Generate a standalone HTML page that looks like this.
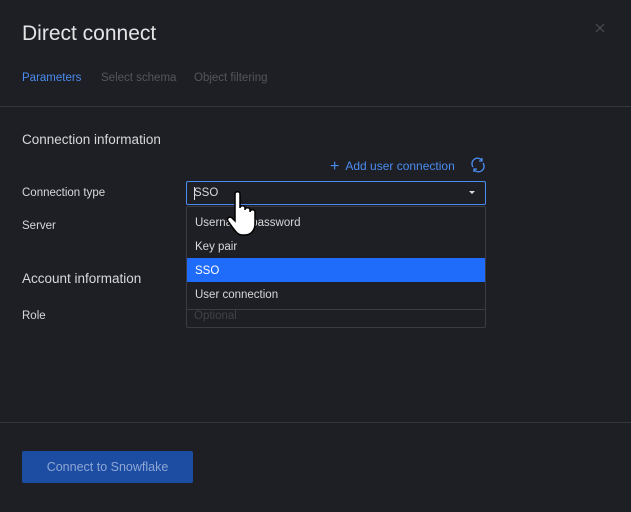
<!DOCTYPE html>
<html><head><style>
body{margin:0;width:631px;height:512px;background:#1e1f24;font-family:"Liberation Sans",sans-serif;position:relative;overflow:hidden}
.a{position:absolute;white-space:nowrap}
</style></head><body>
<div class="a" style="left:22px;top:22px;font-size:21px;color:#e4e4e6">Direct connect</div>
<svg class="a" style="left:595px;top:23px" width="10" height="10" viewBox="0 0 10 10" stroke="#4a4c52" stroke-width="1.2"><path d="M1 1l8 8M9 1l-8 8"/></svg>
<div class="a" style="left:22px;top:72px;font-size:11.5px;color:#4a8cf0">Parameters</div>
<div class="a" style="left:101px;top:72px;font-size:11.5px;color:#54565c">Select schema</div>
<div class="a" style="left:194px;top:72px;font-size:11.5px;color:#54565c">Object filtering</div>
<div class="a" style="left:0;top:106px;width:631px;height:1px;background:#34363b"></div>
<div class="a" style="left:22px;top:132px;font-size:13.5px;color:#d8d8da">Connection information</div>
<div class="a" style="left:330px;top:157px;font-size:12px;color:#4a8cf0"><span style="font-size:16px;position:relative;top:1px">+</span>&nbsp; Add user connection</div>
<svg class="a" style="left:470px;top:157px" width="16" height="16" viewBox="0 0 16 16" fill="none" stroke="#4a8cf0" stroke-width="1.3"><path d="M3 10A5.5 5.5 0 0 1 12 3.5M13 6A5.5 5.5 0 0 1 4 12.5"/><path d="M12 1v3h-3M4 15v-3h3"/></svg>
<div class="a" style="left:22px;top:187px;font-size:11.5px;color:#d8d8da">Connection type</div>
<div class="a" style="left:22px;top:220px;font-size:11.5px;color:#d8d8da">Server</div>
<div class="a" style="left:22px;top:271px;font-size:13.5px;color:#d8d8da">Account information</div>
<div class="a" style="left:22px;top:310px;font-size:11.5px;color:#d8d8da">Role</div>
<div class="a" style="left:186px;top:181px;width:298px;height:22px;border:1px solid #4a8cf0;border-radius:2px"></div>
<div class="a" style="left:194px;top:187px;font-size:11.5px;color:#d8d8da">SSO</div>
<div class="a" style="left:194px;top:187px;width:1px;height:13px;background:#ddd"></div>
<div class="a" style="left:469px;top:191px;width:0;height:0;border-left:3px solid transparent;border-right:3px solid transparent;border-top:3px solid #ddd"></div>
<div class="a" style="left:186px;top:206px;width:298px;height:120px;border:1px solid #3a3c42;border-radius:2px"></div>
<div class="a" style="left:194px;top:310px;font-size:11.5px;color:#3f4146">Optional</div>
<div class="a" style="left:187px;top:207px;width:298px;height:102px;background:#1e1f24;border-bottom:1px solid #3a3c42;border-radius:2px"></div>
<div class="a" style="left:195px;top:217px;font-size:11.5px;color:#d8d8da">Username/password</div>
<div class="a" style="left:195px;top:241px;font-size:11.5px;color:#d8d8da">Key pair</div>
<div class="a" style="left:187px;top:258px;width:298px;height:24px;background:#1f6cfb"></div>
<div class="a" style="left:195px;top:265px;font-size:11.5px;color:#fff">SSO</div>
<div class="a" style="left:195px;top:289px;font-size:11.5px;color:#d8d8da">User connection</div>
<svg class="a" style="left:226px;top:190px" width="34" height="48" viewBox="0 0 34 48"><path d="M9 4c0-3 5-3 5 0v14c0-3 5-3 5 0v2c0-3 5-3 5 0v2c0-3 5-3 5 0v12c0 6-4 11-10 11h-2c-5 0-7-3-10-7l-5-7c-2-3 2-5 4-3l3 3V4z" fill="#fff" stroke="#000" stroke-width="1.5"/></svg>
<div class="a" style="left:0;top:422px;width:631px;height:1px;background:#34363b"></div>
<div class="a" style="left:22px;top:451px;width:171px;height:32px;background:#1d4da3;border-radius:2px;color:#8ea6d4;font-size:12.5px;line-height:32px;text-align:center">Connect to Snowflake</div>
</body></html>
